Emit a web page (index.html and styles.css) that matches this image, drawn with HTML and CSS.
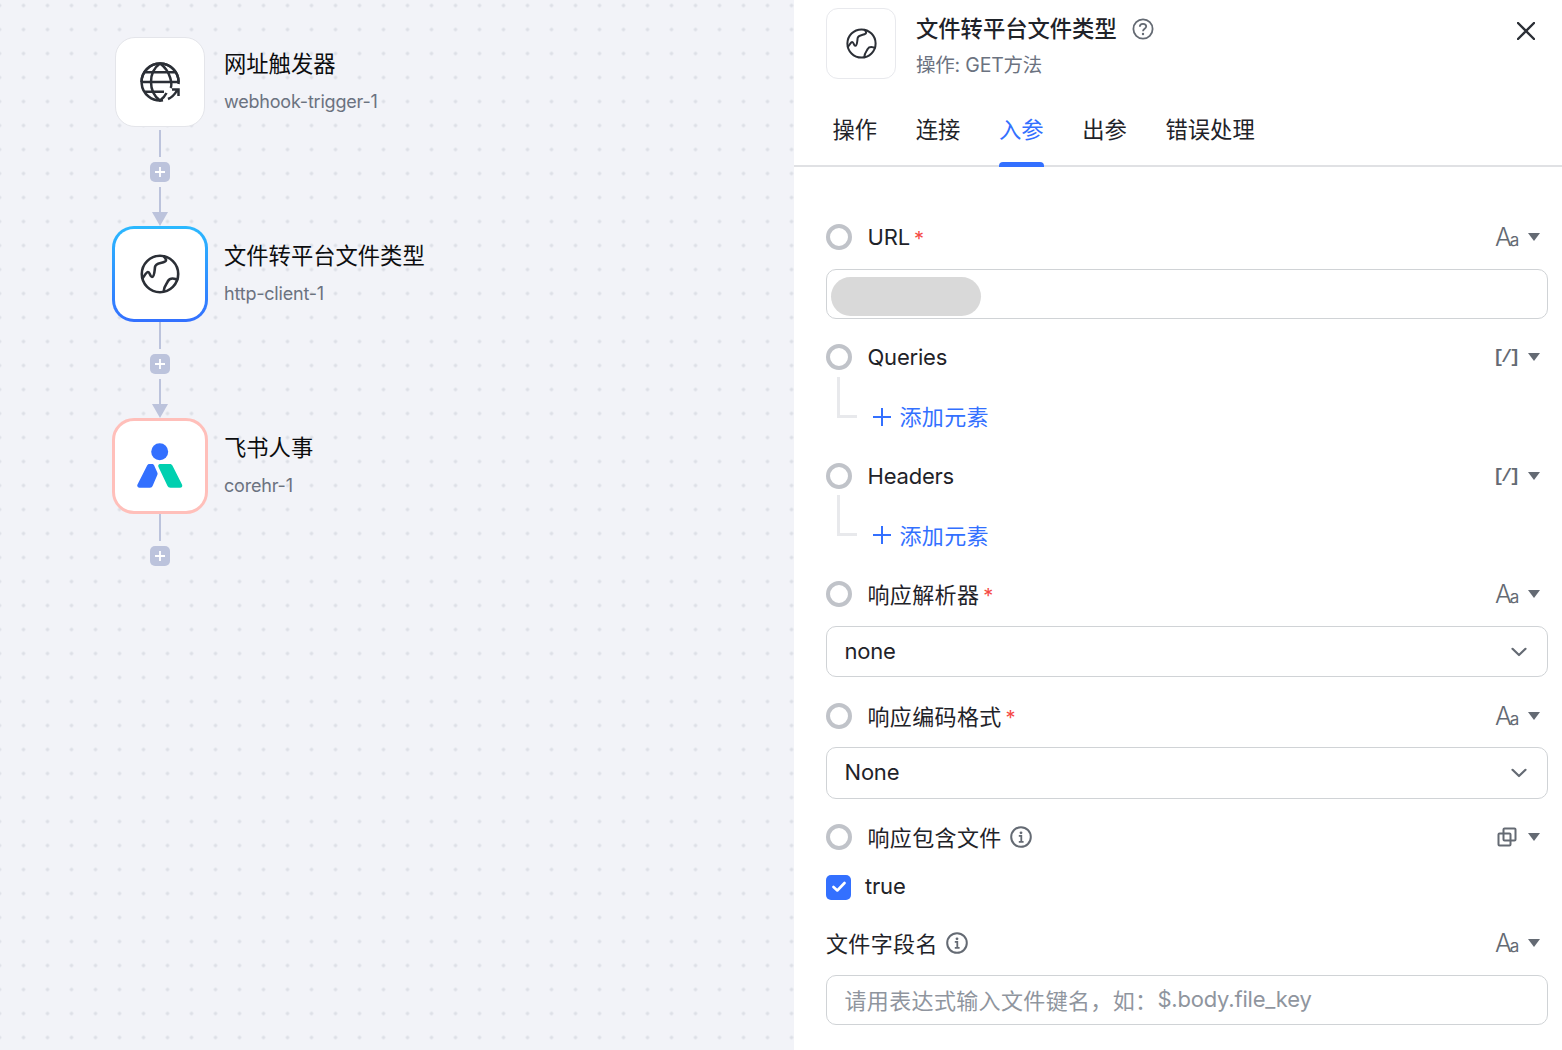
FILE: index.html
```html
<!DOCTYPE html>
<html lang="zh">
<head>
<meta charset="utf-8">
<title>文件转平台文件类型</title>
<link rel="stylesheet" href="styles.css">
</head>
<body>
<svg class="defs" width="0" height="0" aria-hidden="true">
  <symbol id="earth" viewBox="-20 -20 40 40">
    <g fill="none" stroke="currentColor" stroke-width="2.600" stroke-linejoin="round">
      <circle cx="0" cy="0" r="18.200"/>
      <path d="M3.500 -18C6.500 -15 7 -13 4 -12C0 -10.500 -4.500 -11 -5 -7C-5.500 -3 -5.500 3 -8 3C-10 3 -10 -2 -12 -2C-14 -2 -16 3 -18 5"/>
      <path d="M18 6.500C15 4 10 3.500 8 7C7 10 4 11 3.500 18"/>
    </g>
  </symbol>
  <symbol id="info" viewBox="0 0 22 22">
    <circle cx="11" cy="11" r="9.800" fill="none" stroke="currentColor" stroke-width="2"/>
    <circle cx="11" cy="6.800" r="1.400" fill="currentColor"/>
    <path d="M8.800 9.800H11.300V15.500M8.800 15.800H13.600" fill="none" stroke="currentColor" stroke-width="1.800"/>
  </symbol>
  <symbol id="chev" viewBox="0 0 16 10">
    <path d="M1.500 1.800L8 8L14.500 1.800" fill="none" stroke="currentColor" stroke-width="2.200" stroke-linecap="round" stroke-linejoin="round"/>
  </symbol>
  <symbol id="plus" viewBox="0 0 18 18">
    <path d="M9 0V18M0 9H18" fill="none" stroke="currentColor" stroke-width="2"/>
  </symbol>
  <symbol id="mini" viewBox="0 0 10 10">
    <path d="M5 0V10M0 5H10" fill="none" stroke="currentColor" stroke-width="1.800"/>
  </symbol>
</svg>

<main class="canvas">
  <div class="node">
    <div class="node-slot">
      <div class="node-box node-box-plain">
        <svg class="node-icon" viewBox="-20 -20 40 40">
          <g fill="none" stroke="#2b2f36" stroke-width="2.500">
            <path d="M18.500 2A18.500 18.500 0 1 0 3 18.300"/>
            <path d="M-18.500 0A18.500 18.500 0 0 1 18.500 0"/>
            <path d="M0 -18.500C-12 -10 -12 10 0 18.500C3 16.500 5 14 6.500 11"/>
            <path d="M0 -18.500C12 -10 12 4 10.500 6"/>
            <path d="M-15.500 -9.800H15.500M-18.500 0H18.500M-15.500 9.800H4"/>
            <path d="M8 17C11.500 15.500 15 12 17 8.500M12 7.500H18.500V14"/>
          </g>
        </svg>
      </div>
    </div>
    <div class="node-text">
      <div class="node-title">网址触发器</div>
      <div class="node-sub">webhook-trigger-1</div>
    </div>
  </div>
  <div class="link">
    <span class="line line-top"></span>
    <span class="add"><svg class="add-mini"><use href="#mini"/></svg></span>
    <span class="line line-bottom"></span>
    <span class="arrow"></span>
  </div>

  <div class="node">
    <div class="node-slot">
      <div class="node-box node-box-active">
        <svg class="node-icon earth-icon"><use href="#earth"/></svg>
      </div>
    </div>
    <div class="node-text">
      <div class="node-title">文件转平台文件类型</div>
      <div class="node-sub">http-client-1</div>
    </div>
  </div>
  <div class="link">
    <span class="line line-top"></span>
    <span class="add"><svg class="add-mini"><use href="#mini"/></svg></span>
    <span class="line line-bottom"></span>
    <span class="arrow"></span>
  </div>

  <div class="node">
    <div class="node-slot">
      <div class="node-box node-box-warn">
        <svg class="corehr-icon" viewBox="0 0 46 46">
          <circle cx="22.700" cy="8.700" r="8.500" fill="#3370ff"/>
          <path d="M12.500 21H15C16 21 16.800 21.500 17.200 22.500L20.300 29.500C20.700 30.400 20.700 31 20.300 32L15.700 42.800C15.200 44 14.300 44.700 13 44.700H2.500C0.700 44.700 -0.300 43 0.500 41.500L10 22.800C10.500 21.600 11.300 21 12.500 21Z" fill="#3370ff"/>
          <path d="M23 21H33C34 21 35 21.600 35.400 22.500L45 41.500C45.800 43 45 44.700 43 44.700H33.500C32 44.700 31 44 30.400 42.800L21.500 24C20.800 22.500 21.500 21 23 21Z" fill="#00d0b0"/>
        </svg>
      </div>
    </div>
    <div class="node-text">
      <div class="node-title">飞书人事</div>
      <div class="node-sub">corehr-1</div>
    </div>
  </div>
  <div class="link">
    <span class="line line-top"></span>
    <span class="add"><svg class="add-mini"><use href="#mini"/></svg></span>
  </div>
</main>

<aside class="panel">
  <header class="panel-head">
    <div class="head-icon"><svg class="head-earth"><use href="#earth"/></svg></div>
    <div class="head-text">
      <div class="head-title"><span class="head-name">文件转平台文件类型</span>
        <svg class="help" viewBox="0 0 22 22">
          <circle cx="11" cy="11" r="9.600" fill="none" stroke="currentColor" stroke-width="1.800"/>
          <path d="M7.800 8.800C7.800 6.800 9.300 5.800 11 5.800C12.800 5.800 14.200 6.900 14.200 8.500C14.200 10.800 11 10.800 11 13.200" fill="none" stroke="currentColor" stroke-width="1.800"/>
          <circle cx="11" cy="16" r="1.200" fill="currentColor"/>
        </svg>
      </div>
      <div class="head-sub">操作: GET方法</div>
    </div>
    <svg class="close" viewBox="0 0 18 18">
      <path d="M1 1L17 17M17 1L1 17" fill="none" stroke="currentColor" stroke-width="2.400" stroke-linecap="round"/>
    </svg>
  </header>

  <nav class="tabs">
    <span class="tab">操作</span>
    <span class="tab">连接</span>
    <span class="tab tab-active">入参</span>
    <span class="tab">出参</span>
    <span class="tab">错误处理</span>
  </nav>

  <form class="form">
    <div class="row">
      <span class="radio"></span>
      <span class="label"><span>URL</span><i class="req">*</i></span>
      <span class="type"><span class="aa">A<small>a</small></span><span class="caret"></span></span>
    </div>
    <div class="control control-pill"><span class="pill"></span></div>

    <div class="row row-gap">
      <span class="radio"></span>
      <span class="label"><span>Queries</span></span>
      <span class="type"><span class="brk">[/]</span><span class="caret"></span></span>
    </div>
    <div class="add-row">
      <span class="tree"></span>
      <svg class="add-plus"><use href="#plus"/></svg>
      <span class="add-text cjk">添加元素</span>
    </div>

    <div class="row row-wide-gap">
      <span class="radio"></span>
      <span class="label"><span>Headers</span></span>
      <span class="type"><span class="brk">[/]</span><span class="caret"></span></span>
    </div>
    <div class="add-row">
      <span class="tree"></span>
      <svg class="add-plus"><use href="#plus"/></svg>
      <span class="add-text cjk">添加元素</span>
    </div>

    <div class="row row-wide-gap">
      <span class="radio"></span>
      <span class="label"><span class="cjk">响应解析器</span><i class="req">*</i></span>
      <span class="type"><span class="aa">A<small>a</small></span><span class="caret"></span></span>
    </div>
    <div class="control control-select">
      <span class="control-value">none</span>
      <svg class="chev"><use href="#chev"/></svg>
    </div>

    <div class="row row-wide-gap">
      <span class="radio"></span>
      <span class="label"><span class="cjk">响应编码格式</span><i class="req">*</i></span>
      <span class="type"><span class="aa">A<small>a</small></span><span class="caret"></span></span>
    </div>
    <div class="control control-select control-select-tall">
      <span class="control-value">None</span>
      <svg class="chev"><use href="#chev"/></svg>
    </div>

    <div class="row row-gap">
      <span class="radio"></span>
      <span class="label"><span class="cjk">响应包含文件</span><svg class="info"><use href="#info"/></svg></span>
      <span class="type">
        <svg class="copy" viewBox="0 0 20 20">
          <g fill="none" stroke="currentColor" stroke-width="2">
            <rect x="1.500" y="6.500" width="12" height="12" rx="1"/>
            <rect x="6.500" y="1.500" width="12" height="12" rx="1"/>
          </g>
        </svg>
        <span class="caret"></span>
      </span>
    </div>
    <div class="check-row">
      <span class="check">
        <svg class="check-mark" viewBox="0 0 14 12"><path d="M1.500 6L5.300 9.500L12.500 2" fill="none" stroke="#fff" stroke-width="2.600" stroke-linecap="round" stroke-linejoin="round"/></svg>
      </span>
      <span class="control-value">true</span>
    </div>

    <div class="row row-plain">
      <span class="label label-flush"><span class="cjk">文件字段名</span><svg class="info"><use href="#info"/></svg></span>
      <span class="type"><span class="aa">A<small>a</small></span><span class="caret"></span></span>
    </div>
    <div class="control control-text"><span class="cjk">请用表达式输入文件键名，如：</span><span class="control-value">$.body.file_key</span></div>
  </form>
</aside>
</body>
</html>
```

FILE: styles.css
```css
* {
  box-sizing: border-box;
}

html,
body {
  margin: 0;
  height: 100%;
}

body {
  display: flex;
  height: 1050px;
  overflow: hidden;
  background: #fff;
  color: #1f2329;
  font-family: Inter, "Noto Sans CJK SC", sans-serif;
  font-size: 22px;
}

.defs {
  position: absolute;
}

.cjk {
  padding-bottom: 3px;
  letter-spacing: 0.35px;
}

/* canvas */
.canvas {
  flex: 0 0 794px;
  display: flex;
  flex-direction: column;
  padding: 34px 0 0 112px;
  background-color: #f2f3f8;
  background-image: radial-gradient(circle at center, #dcdfe6 0, #dcdfe6 1.4px, transparent 1.9px);
  background-size: 24px 24px;
  background-position: 11.500px -6.500px;
}

.node {
  display: flex;
  align-items: center;
  gap: 16px;
  height: 96px;
}

.node-slot {
  flex: 0 0 96px;
  height: 96px;
  display: flex;
  align-items: center;
  justify-content: center;
}

.node-box {
  display: flex;
  align-items: center;
  justify-content: center;
  background: #fff;
}

.node-box-plain {
  width: 90px;
  height: 90px;
  border: 1px solid #e4e5ea;
  border-radius: 20px;
}

.node-box-active,
.node-box-warn {
  width: 96px;
  height: 96px;
  border: 3px solid transparent;
  border-radius: 22px;
}

.node-box-active {
  background:
    linear-gradient(#fff, #fff) padding-box,
    linear-gradient(180deg, #2bb9ff 0%, #3370ff 100%) border-box;
}

.node-box-warn {
  border-color: #ffbfba;
}

.node-icon {
  width: 40px;
  height: 40px;
}

.earth-icon {
  color: #2b2f36;
}

.corehr-icon {
  width: 46px;
  height: 46px;
}

.node-text {
  display: flex;
  flex-direction: column;
  gap: 11px;
}

.node-title {
  padding-bottom: 2px;
  color: #0c0d0f;
  font-size: 22.300px;
  line-height: 26px;
}

.node-sub {
  color: #6b7280;
  font-size: 18px;
  line-height: 24px;
  letter-spacing: -0.200px;
}

.link {
  flex: 0 0 96px;
  width: 96px;
  display: flex;
  flex-direction: column;
  align-items: center;
}

.line {
  display: block;
  width: 2px;
  background: #bcc3dc;
}

.line-top {
  height: 27px;
}

.line-bottom {
  height: 25px;
}

.add {
  display: flex;
  align-items: center;
  justify-content: center;
  width: 20px;
  height: 20px;
  margin: 5px 0;
  border-radius: 5px;
  background: #bcc3dc;
  color: #fff;
}

.add-mini {
  width: 10px;
  height: 10px;
}

.arrow {
  width: 0;
  height: 0;
  border-left: 8px solid transparent;
  border-right: 8px solid transparent;
  border-top: 14px solid #bcc3dc;
}

/* panel */
.panel {
  flex: 1;
  min-width: 0;
  background: #fff;
}

.panel-head {
  display: flex;
  align-items: flex-start;
  height: 98px;
  padding: 8px 27px 0 32px;
}

.head-icon {
  flex: 0 0 70px;
  height: 71px;
  display: flex;
  align-items: center;
  justify-content: center;
  border: 1px solid #e8e9ed;
  border-radius: 12px;
}

.head-earth {
  width: 31px;
  height: 31px;
  color: #2b2f36;
}

.head-text {
  flex: 1;
  margin-left: 20px;
}

.head-title {
  display: flex;
  align-items: center;
  gap: 15px;
  height: 42px;
  color: #1f2329;
  font-size: 22.300px;
  font-weight: 500;
}

.head-name {
  padding-bottom: 4px;
}

.help {
  width: 22px;
  height: 22px;
  color: #646a73;
}

.head-sub {
  color: #6b7280;
  font-size: 19.500px;
  line-height: 30px;
  letter-spacing: -0.200px;
}

.close {
  width: 18px;
  height: 18px;
  margin-top: 14px;
  color: #2b2f36;
}

.tabs {
  display: flex;
  gap: 38.650px;
  height: 69px;
  padding: 15px 0 0 38.500px;
  border-bottom: 2px solid #e0e1e4;
  font-size: 22.300px;
  line-height: 34px;
}

.tab {
  position: relative;
  height: 52px;
}

.tab-active {
  color: #3370ff;
}

.tab-active::after {
  content: "";
  position: absolute;
  left: 0;
  right: 0;
  bottom: -2px;
  height: 5px;
  background: #3370ff;
  border-radius: 4px 4px 0 0;
}

.form {
  display: flex;
  flex-direction: column;
  padding: 50px 14px 0 32px;
}

.row {
  display: flex;
  align-items: center;
  flex: 0 0 40px;
  height: 40px;
}

.row-gap {
  margin-top: 18px;
}

.row-wide-gap {
  margin-top: 19px;
}

.row-plain {
  margin-top: 16px;
}

.radio {
  flex: 0 0 26px;
  height: 26px;
  border: 4px solid #c0c3c9;
  border-radius: 50%;
}

.label {
  display: flex;
  align-items: center;
  margin-left: 15.500px;
  color: #1f2329;
  letter-spacing: -0.200px;
}

.label-flush {
  margin-left: 0;
}

.req {
  margin: 4px 0 0 4px;
  color: #f54a45;
  font-style: normal;
  font-size: 20px;
  line-height: 20px;
}

.info {
  width: 22px;
  height: 22px;
  margin-left: 8px;
  color: #646a73;
}

.type {
  display: flex;
  align-items: center;
  justify-content: flex-end;
  margin-left: auto;
  padding-right: 8px;
  color: #646a73;
}

.aa {
  width: 24px;
  padding-top: 2px;
  font-size: 25px;
  font-weight: 300;
  line-height: 24px;
  letter-spacing: -2px;
}

.aa small {
  font-size: 17px;
  font-weight: 400;
}

.brk {
  width: 26px;
  margin-left: -2px;
  font-family: "Liberation Mono", monospace;
  font-size: 18px;
  font-weight: 700;
  line-height: 24px;
  letter-spacing: -2.500px;
  white-space: nowrap;
}

.copy {
  width: 20px;
  height: 20px;
  margin-right: 2px;
}

.caret {
  width: 0;
  height: 0;
  margin-left: 9px;
  border-left: 6.500px solid transparent;
  border-right: 6.500px solid transparent;
  border-top: 8px solid #646a73;
}

.control {
  flex: 0 0 50px;
  height: 50px;
  margin-top: 12px;
  border: 1px solid #d0d3d6;
  border-radius: 10px;
  background: #fff;
}

.control-value {
  padding-bottom: 2px;
  letter-spacing: -0.200px;
}

.control-pill {
  padding: 7px 4px;
}

.pill {
  display: block;
  width: 150px;
  height: 39px;
  border-radius: 20px;
  background: #d9d9d9;
}

.control-select {
  display: flex;
  align-items: center;
  justify-content: space-between;
  flex-basis: 51px;
  height: 51px;
  padding: 0 20px 0 17.500px;
}

.control-select-tall {
  flex-basis: 52px;
  height: 52px;
  margin-top: 11px;
}

.chev {
  width: 16px;
  height: 10px;
  color: #646a73;
}

.control-text {
  display: flex;
  align-items: center;
  padding: 0 17.500px;
  color: #8f959e;
}

.add-row {
  position: relative;
  display: flex;
  align-items: center;
  flex: 0 0 40px;
  height: 40px;
  margin-top: 19.500px;
  padding-left: 47px;
  color: #3370ff;
}

.tree {
  position: absolute;
  left: 11px;
  top: -20px;
  width: 20px;
  height: 41px;
  border-left: 3px solid #e8e9ec;
  border-bottom: 3px solid #e8e9ec;
}

.add-plus {
  width: 18px;
  height: 18px;
}

.add-text {
  margin-left: 8.500px;
}

.check-row {
  display: flex;
  align-items: center;
  gap: 14px;
  flex: 0 0 40px;
  height: 40px;
  margin-top: 10px;
}

.check {
  display: flex;
  align-items: center;
  justify-content: center;
  flex: 0 0 25px;
  height: 25px;
  border-radius: 5px;
  background: #3370ff;
}

.check-mark {
  width: 14px;
  height: 12px;
}
```
